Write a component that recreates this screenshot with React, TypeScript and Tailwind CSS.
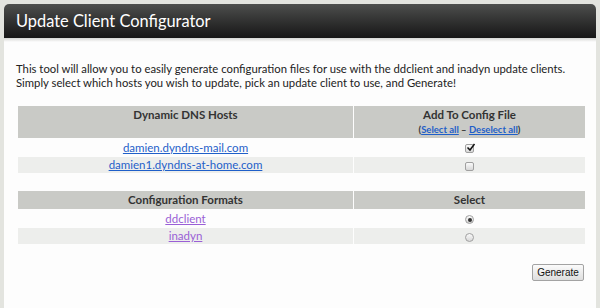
import React from "react";

const font = { fontFamily: "Lato, 'DejaVu Sans', sans-serif" };

function Check({ checked }: { checked?: boolean }) {
  return (
    <span className="inline-flex relative w-[9px] h-[9px] border border-[#a0a0a0] rounded-[2px] bg-gradient-to-b from-[#fafafa] to-[#d8d8d8] align-middle">
      {checked && (
        <svg className="absolute left-[0px] top-[-2px]" width="10" height="9" viewBox="0 0 10 9">
          <path d="M1.5 4.5 L4 7 L8.5 1" fill="none" stroke="#111" strokeWidth="1.5" />
        </svg>
      )}
    </span>
  );
}

function Radio({ checked }: { checked?: boolean }) {
  return (
    <span className="inline-flex items-center justify-center w-[9px] h-[9px] border border-[#a0a0a0] rounded-full bg-gradient-to-b from-[#fafafa] to-[#d8d8d8] align-middle">
      {checked && <span className="w-[4px] h-[4px] rounded-full bg-[#333]" />}
    </span>
  );
}

export default function App() {
  return (
    <div className="w-[600px] h-[308px] overflow-hidden bg-[#e3e4df] pt-[4px] px-[4px]" style={font}>
      <div className="h-full bg-[#fdfdfd] rounded-t-[5px] flex flex-col">
        <div className="h-[34px] rounded-t-[5px] bg-gradient-to-b from-[#4e4f4e] to-[#171717] flex items-center pl-[12px] text-white text-[16.4px]">
          Update Client Configurator
        </div>
        <div className="h-[4px] bg-gradient-to-b from-[#d6d7d4] to-[#fdfdfd]" />
        <div className="pl-[12px] pt-[20px] text-[11.3px] leading-[14px] text-[#222]">
          <p>This tool will allow you to easily generate configuration files for use with the ddclient and inadyn update clients.</p>
          <p>Simply select which hosts you wish to update, pick an update client to use, and Generate!</p>
        </div>
        <div className="pl-[13px] mt-[15px]">
          <table className="w-[569px] border-separate border-spacing-[1px] text-[#333]">
            <thead>
              <tr className="bg-[#c9cac6]">
                <th className="w-[335px] h-[32px] align-top pt-[2px] text-[11.5px] font-bold leading-[14px]">Dynamic DNS Hosts</th>
                <th className="h-[32px] align-top pt-[2px] text-[11.5px] font-bold leading-[14px]">
                  <div>Add To Config File</div>
                  <div className="text-[9.5px] leading-[14px] pt-[1px]">
                    (<a className="text-[#1f5fc9] underline">Select all</a> – <a className="text-[#1f5fc9] underline">Deselect all</a>)
                  </div>
                </th>
              </tr>
            </thead>
            <tbody className="text-[11.5px]">
              <tr className="bg-[#fdfdfd]">
                <td className="h-[17px] text-center leading-[14px]"><a className="text-[#1f5fc9] underline">damien.dyndns-mail.com</a></td>
                <td className="h-[17px] text-center leading-[14px]"><Check checked /></td>
              </tr>
              <tr className="bg-[#edeeec]">
                <td className="h-[16px] text-center leading-[14px]"><a className="text-[#1f5fc9] underline">damien1.dyndns-at-home.com</a></td>
                <td className="h-[16px] text-center leading-[14px]"><Check /></td>
              </tr>
            </tbody>
          </table>
          <table className="w-[569px] mt-[16px] border-separate border-spacing-[1px] text-[#333]">
            <thead>
              <tr className="bg-[#c9cac6]">
                <th className="w-[335px] h-[18px] text-[11.5px] font-bold leading-[14px]">Configuration Formats</th>
                <th className="h-[18px] text-[11.5px] font-bold leading-[14px]">Select</th>
              </tr>
            </thead>
            <tbody className="text-[11.5px]">
              <tr className="bg-[#fdfdfd]">
                <td className="h-[17px] text-center leading-[14px]"><a className="text-[#9a5fd6] underline">ddclient</a></td>
                <td className="h-[17px] text-center leading-[14px]"><Radio checked /></td>
              </tr>
              <tr className="bg-[#edeeec]">
                <td className="h-[16px] text-center leading-[14px]"><a className="text-[#9a5fd6] underline">inadyn</a></td>
                <td className="h-[16px] text-center leading-[14px]"><Radio /></td>
              </tr>
            </tbody>
          </table>
          <div className="w-[569px] flex justify-end mt-[19px] pr-[2px]">
            <button
              className="h-[17px] w-[52px] border border-[#a3a3a3] rounded-[2px] bg-gradient-to-b from-[#fbfbfb] to-[#dedede] text-[10px] text-[#111] leading-[15px]"
              style={{ fontFamily: "'Liberation Sans', Arial, sans-serif" }}
            >
              Generate
            </button>
          </div>
        </div>
      </div>
    </div>
  );
}
